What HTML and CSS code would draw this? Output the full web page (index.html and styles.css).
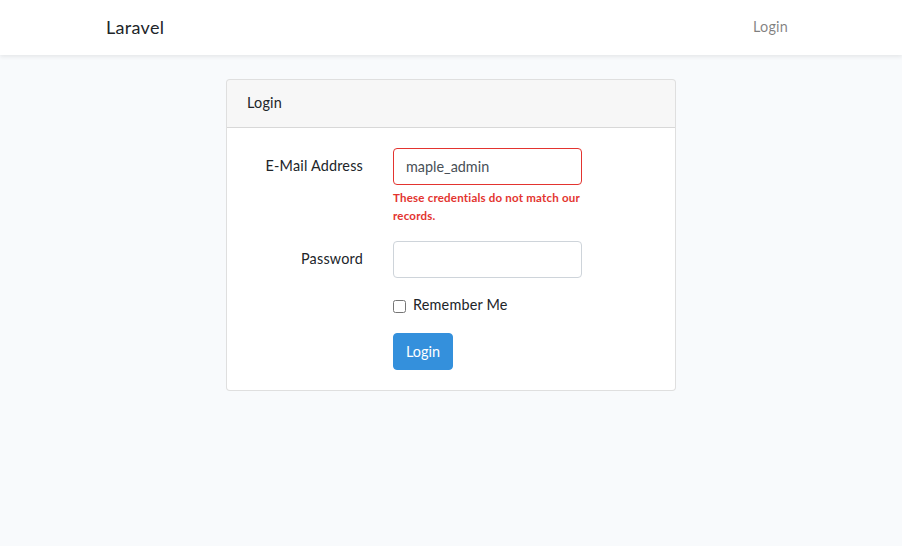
FILE: index.html
```html
<!DOCTYPE html>
<html lang="en">
<head>
<meta charset="utf-8">
<title>Laravel</title>
<link rel="stylesheet" href="styles.css">
</head>
<body>
<nav class="navbar">
  <div class="container nav-inner">
    <a class="brand" href="#">Laravel</a>
    <a class="nav-link" href="#">Login</a>
  </div>
</nav>
<main class="main">
  <div class="container center">
    <div class="card">
      <div class="card-header">Login</div>
      <div class="card-body">
        <form class="form">
          <div class="form-row">
            <label class="label" for="email">E-Mail Address</label>
            <div class="field">
              <input id="email" class="input invalid" type="text" value="maple_admin">
              <div class="feedback">These credentials do not match our records.</div>
            </div>
          </div>
          <div class="form-row">
            <label class="label" for="password">Password</label>
            <div class="field">
              <input id="password" class="input" type="password">
            </div>
          </div>
          <div class="form-row">
            <div class="label-spacer"></div>
            <div class="field check">
              <input id="remember" class="checkbox" type="checkbox">
              <label class="check-label" for="remember">Remember Me</label>
            </div>
          </div>
          <div class="form-row last">
            <div class="label-spacer"></div>
            <div class="field">
              <button type="button" class="btn">Login</button>
            </div>
          </div>
        </form>
      </div>
    </div>
  </div>
</main>
</body>
</html>
```
FILE: styles.css
```css
* { box-sizing: border-box; }
html { font-size: 16px; }
body {
  margin: 0;
  background: #f8fafc;
  color: #212529;
  font-family: "Lato", "Open Sans", sans-serif;
  font-size: 14.4px;
  line-height: 1.6;
  letter-spacing: 0.2px;
}
.container {
  width: 720px;
  margin: 0 auto;
  padding: 0 15px;
}
.navbar {
  background: #fff;
  box-shadow: 0 2px 4px rgba(0,0,0,.075);
  padding: 8px 0;
}
.nav-inner {
  display: flex;
  align-items: center;
  justify-content: space-between;
  height: 39px;
}
.brand {
  color: #212529;
  text-decoration: none;
  font-size: 18px;
  line-height: 1.6;
  letter-spacing: 0.3px;
}
.nav-link {
  color: rgba(0,0,0,.5);
  text-decoration: none;
  padding: 8px;
  margin-top: -2px;
}
.main { padding-top: 24px; }
.center { display: flex; justify-content: center; }
.card {
  width: 450px;
  background: #fff;
  border: 1px solid rgba(0,0,0,.125);
  border-radius: 4px;
}
.card-header {
  padding: 11px 20px 13px;
  background: rgba(0,0,0,.03);
  border-bottom: 1px solid rgba(0,0,0,.125);
  border-radius: 3px 3px 0 0;
}
.card-body { padding: 20px; }
.form-row {
  display: grid;
  grid-template-columns: 116px 189px;
  column-gap: 30px;
  margin-bottom: 16px;
}
.form-row.last { margin-bottom: 0; }
.label {
  text-align: right;
  padding-top: 6px;
  padding-bottom: 8px;
}
.input {
  display: block;
  width: 100%;
  height: 37px;
  padding: 6px 12px;
  font: inherit;
  line-height: 1.6;
  color: #495057;
  background: #fff;
  border: 1px solid #ced4da;
  border-radius: 4px;
  outline: none;
}
.input.invalid { border-color: #e3342f; }
.feedback {
  margin-top: 4px;
  font-size: 11.52px;
  font-weight: bold;
  color: #e3342f;
  line-height: 18px;
}
.check {
  display: flex;
  align-items: center;
  height: 23px;
}
.checkbox {
  width: 13px;
  height: 13px;
  margin: 1px 7px 0 0;
}
.check-label { line-height: 1.6; margin-top: -2px; }
.btn {
  font: inherit;
  line-height: 1.6;
  color: #fff;
  background: #3490dc;
  border: 1px solid #3490dc;
  border-radius: 4px;
  padding: 6px 12px;
  cursor: pointer;
}
```
